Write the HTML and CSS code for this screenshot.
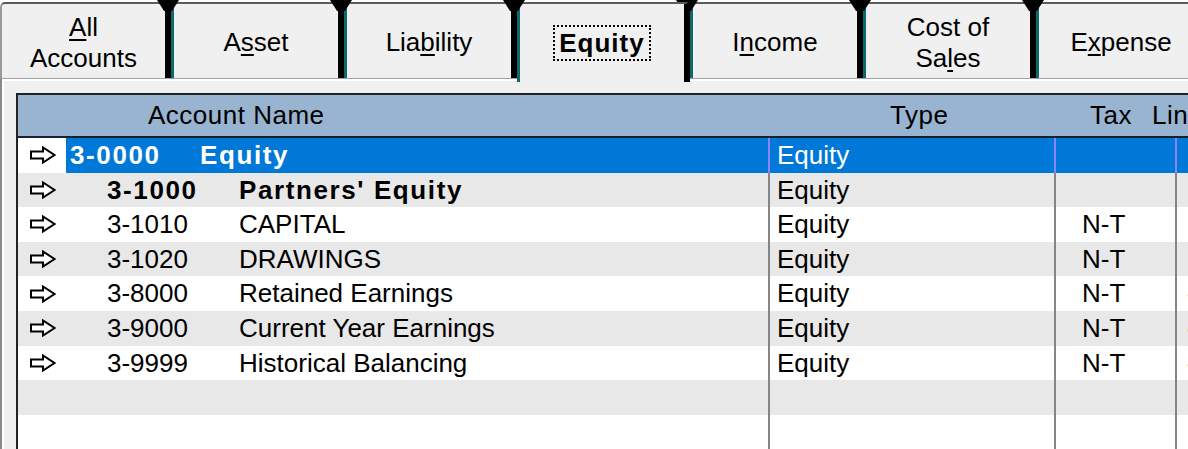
FILE: index.html
```html
<!DOCTYPE html>
<html>
<head>
<meta charset="utf-8">
<title>Accounts List</title>
<link rel="stylesheet" href="styles.css">
</head>
<body>
<div class="app">
  <div class="tabs">
    <div class="tab first"><span class="lbl"><u>A</u>ll<br>Accounts</span></div>
    <div class="tab"><span class="lbl">A<u>s</u>set</span></div>
    <div class="tab"><span class="lbl">Lia<u>b</u>ility</span></div>
    <div class="tab active"><span class="lbl focus">Equity</span></div>
    <div class="tab"><span class="lbl">I<u>n</u>come</span></div>
    <div class="tab"><span class="lbl">Cost of<br>Sa<u>l</u>es</span></div>
    <div class="tab"><span class="lbl">E<u>x</u>pense</span></div>
  </div>
  <div class="panel">
    <div class="list">
      <div class="head">
        <div class="h-name">Account Name</div>
        <div>Type</div>
        <div>Tax</div>
        <div>Linked</div>
      </div>
      <div class="rows">
        <div class="row sel">
          <div class="c-arrow"><svg class="arrow" viewBox="0 0 26 18"><polygon points="1,5.5 13,5.5 13,1.5 24.5,9 13,16.5 13,12.5 1,12.5"/></svg></div>
          <div class="c-acct l1 b"><span class="code">3-0000</span><span class="name">Equity</span></div>
          <div class="c-type">Equity</div>
          <div class="c-tax"></div>
          <div class="c-link"></div>
        </div>
        <div class="row">
          <div class="c-arrow"><svg class="arrow" viewBox="0 0 26 18"><polygon points="1,5.5 13,5.5 13,1.5 24.5,9 13,16.5 13,12.5 1,12.5"/></svg></div>
          <div class="c-acct l2 b"><span class="code">3-1000</span><span class="name">Partners' Equity</span></div>
          <div class="c-type">Equity</div>
          <div class="c-tax"></div>
          <div class="c-link"></div>
        </div>
        <div class="row">
          <div class="c-arrow"><svg class="arrow" viewBox="0 0 26 18"><polygon points="1,5.5 13,5.5 13,1.5 24.5,9 13,16.5 13,12.5 1,12.5"/></svg></div>
          <div class="c-acct l2"><span class="code">3-1010</span><span class="name">CAPITAL</span></div>
          <div class="c-type">Equity</div>
          <div class="c-tax">N-T</div>
          <div class="c-link"></div>
        </div>
        <div class="row">
          <div class="c-arrow"><svg class="arrow" viewBox="0 0 26 18"><polygon points="1,5.5 13,5.5 13,1.5 24.5,9 13,16.5 13,12.5 1,12.5"/></svg></div>
          <div class="c-acct l2"><span class="code">3-1020</span><span class="name">DRAWINGS</span></div>
          <div class="c-type">Equity</div>
          <div class="c-tax">N-T</div>
          <div class="c-link"></div>
        </div>
        <div class="row">
          <div class="c-arrow"><svg class="arrow" viewBox="0 0 26 18"><polygon points="1,5.5 13,5.5 13,1.5 24.5,9 13,16.5 13,12.5 1,12.5"/></svg></div>
          <div class="c-acct l2"><span class="code">3-8000</span><span class="name">Retained Earnings</span></div>
          <div class="c-type">Equity</div>
          <div class="c-tax">N-T</div>
          <div class="c-link">✓</div>
        </div>
        <div class="row">
          <div class="c-arrow"><svg class="arrow" viewBox="0 0 26 18"><polygon points="1,5.5 13,5.5 13,1.5 24.5,9 13,16.5 13,12.5 1,12.5"/></svg></div>
          <div class="c-acct l2"><span class="code">3-9000</span><span class="name">Current Year Earnings</span></div>
          <div class="c-type">Equity</div>
          <div class="c-tax">N-T</div>
          <div class="c-link">✓</div>
        </div>
        <div class="row">
          <div class="c-arrow"><svg class="arrow" viewBox="0 0 26 18"><polygon points="1,5.5 13,5.5 13,1.5 24.5,9 13,16.5 13,12.5 1,12.5"/></svg></div>
          <div class="c-acct l2"><span class="code">3-9999</span><span class="name">Historical Balancing</span></div>
          <div class="c-type">Equity</div>
          <div class="c-tax">N-T</div>
          <div class="c-link">✓</div>
        </div>
        <div class="row">
          <div class="c-arrow"></div>
          <div class="c-acct"></div>
          <div class="c-type"></div>
          <div class="c-tax"></div>
          <div class="c-link"></div>
        </div>
        <div class="row">
          <div class="c-arrow"></div>
          <div class="c-acct"></div>
          <div class="c-type"></div>
          <div class="c-tax"></div>
          <div class="c-link"></div>
        </div>
        <div class="row">
          <div class="c-arrow"></div>
          <div class="c-acct"></div>
          <div class="c-type"></div>
          <div class="c-tax"></div>
          <div class="c-link"></div>
        </div>
      </div>
    </div>
  </div>
</div>
</body>
</html>
```

FILE: styles.css
```css
* { box-sizing: border-box; }

html, body {
  margin: 0;
  padding: 0;
  background: #ffffff;
  overflow: hidden;
}

body {
  width: 1188px;
  height: 449px;
  font-family: "Liberation Sans", Arial, sans-serif;
  font-size: 26px;
  color: #000;
}

.app {
  width: 1188px;
  height: 449px;
  overflow: hidden;
}

/* ---------- tabs ---------- */
.tabs {
  display: flex;
  height: 78px;
  padding-top: 2px;
  white-space: nowrap;
}

.tab {
  position: relative;
  flex: 0 0 173px;
  height: 76px;
  background: #f0f0f0;
  border-top: 2px solid #5c5c5c;
  border-left: 3px solid #0b6b6b;
  border-right: 6px solid #000;
  border-top-left-radius: 3px;
  display: flex;
  align-items: center;
  justify-content: center;
  text-align: center;
  line-height: 31px;
  padding-top: 3px;
}

.tab.first {
  flex-basis: 171px;
  border-left: 2px solid #9a9a9a;
  border-top-left-radius: 5px;
}

.tab:not(.first)::before {
  content: "";
  position: absolute;
  top: -4px;
  left: -17px;
  width: 22px;
  height: 11px;
  background: #000;
  clip-path: polygon(0 0, 100% 0, 68% 100%, 32% 100%);
}

.tab.active {
  height: 80px;
  margin-bottom: -4px;
  z-index: 2;
  padding-bottom: 4px;
}

.focus {
  font-weight: bold;
  letter-spacing: 1px;
  outline: 2px dotted #000;
  outline-offset: 1px;
  padding: 0 3px;
  line-height: 30px;
}

u {
  text-decoration-thickness: 2px;
  text-underline-offset: 3px;
}

/* ---------- panel ---------- */
.panel {
  height: 371px;
  background: #f0f0f0;
  border-top: 1px solid #a0a0a0;
  border-left: 2px solid #8a8a8a;
  box-shadow: inset 0 2px #ffffff, inset 2px 0 #ffffff;
  padding: 14px 0 0 14px;
}

.list {
  width: 1200px;
  height: 400px;
  background: #fff;
  border-top: 2px solid #222;
  border-left: 2px solid #222;
}

.head {
  display: grid;
  grid-template-columns: 872px 200px 62px 1fr;
  height: 43px;
  line-height: 41px;
  background: #99b4d1;
  border-bottom: 2px solid #18202e;
  letter-spacing: 0.5px;
  white-space: nowrap;
  overflow: hidden;
}

.h-name { padding-left: 130px; }

/* ---------- rows ---------- */
.row {
  display: grid;
  grid-template-columns: 48px 702px 286px 121px 1fr;
  height: 34.6px;
  line-height: 34.6px;
  white-space: nowrap;
}

.row:nth-child(even) { background: #e8e8e8; }

.c-arrow {
  display: flex;
  align-items: center;
  padding-left: 12px;
}

.arrow {
  width: 26px;
  height: 18px;
}

.arrow polygon {
  fill: #fff;
  stroke: #000;
  stroke-width: 2;
  stroke-linejoin: miter;
}

.c-acct {
  display: flex;
}

.l1 .code {
  width: 134px;
  padding-left: 4px;
}

.l2 .code {
  width: 132px;
  margin-left: 41px;
}

.b {
  font-weight: bold;
  letter-spacing: 1.6px;
}

.c-type,
.c-tax,
.c-link {
  border-left: 2px solid #858585;
}

.c-type { padding-left: 7px; }
.c-tax { padding-left: 26px; }
.c-link { padding-left: 7px; }

.row.sel { background: #fff; }

.row.sel .c-acct,
.row.sel .c-type,
.row.sel .c-tax,
.row.sel .c-link {
  background: #0078d7;
  color: #fff;
}

.row.sel .c-type,
.row.sel .c-tax,
.row.sel .c-link {
  border-left-color: #8c84ff;
}
```
